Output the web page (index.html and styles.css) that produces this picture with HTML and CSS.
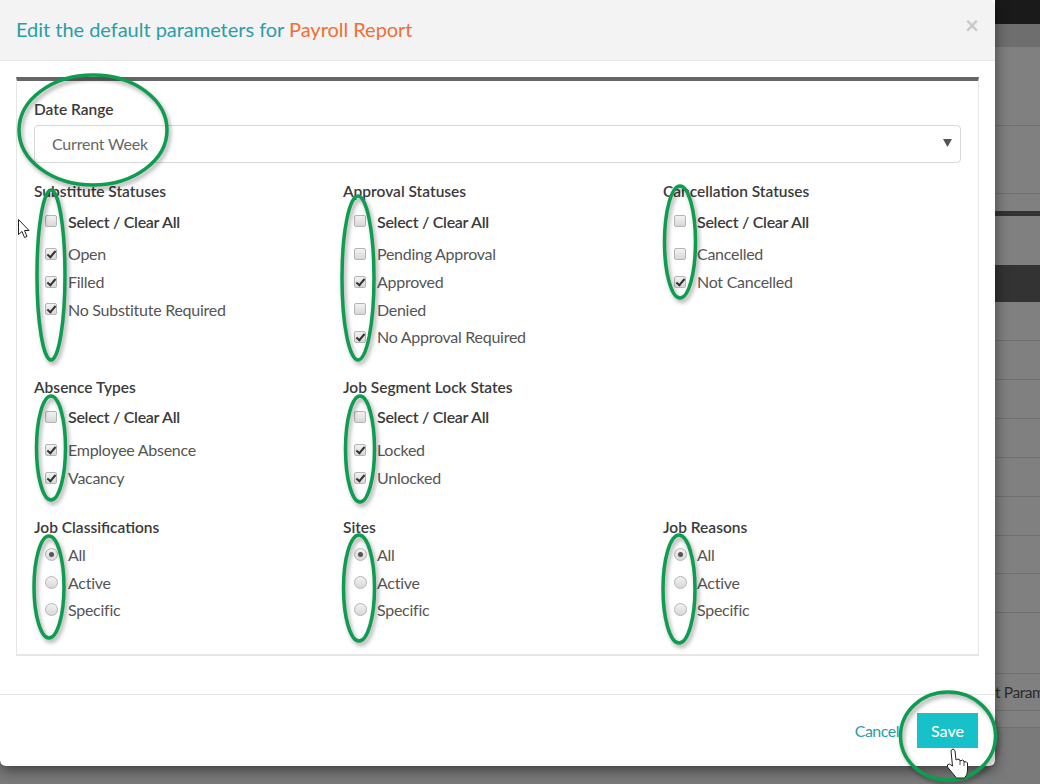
FILE: index.html
```html
<!DOCTYPE html>
<html lang="en">
<head>
  <meta charset="UTF-8" />
  <title>Edit the default parameters</title>
  <link rel="stylesheet" href="styles.css">
</head>
<body>
  <div class="page">
    <div class="topbar"></div>
    <div class="subbar"></div>
    <div class="row row-79"></div>
    <div class="row row-68"></div>
    <div class="row-17"></div>
    <div class="rule"></div>
    <div class="row-49"></div>
    <div class="table-head"></div>
    <div class="row row-39"></div>
    <div class="row row-39"></div>
    <div class="row row-39"></div>
    <div class="row row-39"></div>
    <div class="row row-39"></div>
    <div class="row row-39"></div>
    <div class="row row-38"></div>
    <div class="row row-39"></div>
    <div class="row row-61"></div>
    <div class="row row-37 row-link">t Param</div>
    <div class="row row-17"></div>
  </div>

  <div class="modal">
    <div class="modal-header">
      <h4 class="modal-title">Edit the default parameters for <span class="report-name">Payroll Report</span></h4>
      <span class="close">×</span>
    </div>

    <div class="modal-body">
      <div class="panel">
        <label class="field-label">Date Range</label>
        <div class="select-box">
          <span>Current Week</span>
          <svg class="caret" width="9" height="8" viewBox="0 0 9 8"><path d="M0 0h9L4.500 8z" fill="#555"/></svg>
        </div>

        <div class="param-grid">
          <div class="group group-status">
            <div class="group-title">Substitute Statuses</div>
            <label class="option select-all"><input type="checkbox">Select / Clear All</label>
            <label class="option"><input type="checkbox" checked>Open</label>
            <label class="option"><input type="checkbox" checked>Filled</label>
            <label class="option"><input type="checkbox" checked>No Substitute Required</label>
          </div>
          <div class="group group-status">
            <div class="group-title">Approval Statuses</div>
            <label class="option select-all"><input type="checkbox">Select / Clear All</label>
            <label class="option"><input type="checkbox">Pending Approval</label>
            <label class="option"><input type="checkbox" checked>Approved</label>
            <label class="option"><input type="checkbox">Denied</label>
            <label class="option"><input type="checkbox" checked>No Approval Required</label>
          </div>
          <div class="group group-status">
            <div class="group-title">Cancellation Statuses</div>
            <label class="option select-all"><input type="checkbox">Select / Clear All</label>
            <label class="option"><input type="checkbox">Cancelled</label>
            <label class="option"><input type="checkbox" checked>Not Cancelled</label>
          </div>

          <div class="group group-types">
            <div class="group-title">Absence Types</div>
            <label class="option select-all"><input type="checkbox">Select / Clear All</label>
            <label class="option"><input type="checkbox" checked>Employee Absence</label>
            <label class="option"><input type="checkbox" checked>Vacancy</label>
          </div>
          <div class="group group-types">
            <div class="group-title">Job Segment Lock States</div>
            <label class="option select-all"><input type="checkbox">Select / Clear All</label>
            <label class="option"><input type="checkbox" checked>Locked</label>
            <label class="option"><input type="checkbox" checked>Unlocked</label>
          </div>
          <div class="group group-types"></div>

          <div class="group group-radio">
            <div class="group-title">Job Classifications</div>
            <label class="option"><input type="radio" name="jobclass" checked>All</label>
            <label class="option"><input type="radio" name="jobclass">Active</label>
            <label class="option"><input type="radio" name="jobclass">Specific</label>
          </div>
          <div class="group group-radio">
            <div class="group-title">Sites</div>
            <label class="option"><input type="radio" name="sites" checked>All</label>
            <label class="option"><input type="radio" name="sites">Active</label>
            <label class="option"><input type="radio" name="sites">Specific</label>
          </div>
          <div class="group group-radio">
            <div class="group-title">Job Reasons</div>
            <label class="option"><input type="radio" name="reasons" checked>All</label>
            <label class="option"><input type="radio" name="reasons">Active</label>
            <label class="option"><input type="radio" name="reasons">Specific</label>
          </div>
        </div>
      </div>
    </div>

    <div class="modal-footer">
      <a class="cancel">Cancel</a>
      <button class="save">Save</button>
    </div>
  </div>

  <!-- green circles somebody drew over the screenshot, plus the two mouse pointers -->
  <svg class="marks" width="1040" height="784" viewBox="0 0 1040 784">
    <g class="ring">
      <ellipse cx="93" cy="130" rx="74" ry="55"/>
      <ellipse cx="51" cy="275" rx="14" ry="85"/>
      <ellipse cx="358" cy="278" rx="16" ry="82"/>
      <ellipse cx="680" cy="242" rx="15.500" ry="56"/>
      <ellipse cx="51" cy="448" rx="14.500" ry="52"/>
      <ellipse cx="360" cy="449" rx="14.500" ry="53"/>
      <ellipse cx="49" cy="587" rx="15" ry="51"/>
      <ellipse cx="359" cy="588" rx="15.500" ry="53"/>
      <ellipse cx="679" cy="589" rx="16" ry="54"/>
      <ellipse cx="948" cy="736" rx="47.500" ry="44"/>
    </g>
    <path class="pointer" d="M18.500 219.500v15l3.500-3 2.500 6 2.500-1-2.500-6h4.500z"/>
    <path class="pointer" d="M951 751q2-4 4 0l1 9q2-2 4 0l.5 1q2-2 3.500 0l.5 1q2-1 3 1v8q0 4-3 7h-8l-9-11q-1-3 2-3l3 2z"/>
    <path class="grip" d="M960 760v5M964 761v5"/>
  </svg>
</body>
</html>
```

FILE: styles.css
```css
html, body {
  margin: 0;
  height: 100%;
  overflow: hidden;
}
body {
  background: #7a7a7a;
  font-family: 'Lato', 'Liberation Sans', sans-serif;
  font-size: 16px;
  color: #555;
}

/* page behind the dialog */
.page {
  display: flex;
  flex-direction: column;
}
.topbar {
  height: 24px;
  background: #1a1a1a;
}
.subbar {
  height: 23px;
  background: #6e6e6e;
}
.row {
  box-sizing: border-box;
  background: #808080;
  border-bottom: 1px solid #707070;
}
.row-79 { height: 79px; }
.row-68 { height: 68px; }
.row-17 { height: 17px; background: #808080; }
.row-49 { height: 49px; background: #808080; }
.row-39 { height: 39px; }
.row-38 { height: 38px; }
.row-61 { height: 61px; }
.row-37 { height: 37px; }
.rule {
  height: 5px;
  background: #333;
}
.table-head {
  height: 37px;
  background: #333;
}
.row-link {
  padding-left: 995px;
  line-height: 36px;
  font-size: 15.500px;
  letter-spacing: -0.4px;
  color: #2c2c2c;
  white-space: nowrap;
}

/* dialog */
.modal {
  position: absolute;
  top: 0;
  left: 0;
  width: 995px;
  background: #fff;
  border-radius: 0 0 6px 6px;
  box-shadow: 0 4px 14px rgba(0, 0, 0, 0.5);
}
.modal-header {
  display: flex;
  align-items: center;
  justify-content: space-between;
  box-sizing: border-box;
  height: 61px;
  padding: 0 17px 2px 16px;
  background: #f3f3f3;
  border-bottom: 1px solid #e8e8e8;
  border-top-right-radius: 6px;
}
.modal-title {
  margin: 0;
  font-size: 20px;
  font-weight: 400;
  letter-spacing: -0.03px;
  color: #2a9ea6;
}
.report-name {
  color: #ee6f37;
}
.close {
  font-size: 24px;
  font-weight: 700;
  line-height: 1;
  color: #c9c9c9;
  margin-right: -1px;
  margin-top: -8px;
}
.modal-body {
  padding: 16px;
}
.panel {
  box-sizing: border-box;
  height: 579px;
  padding: 19px 17px 0 17px;
  border: 1px solid #e6e6e6;
  border-top: 4px solid #666;
  border-bottom-width: 2px;
}
.field-label {
  display: block;
  font-size: 15.500px;
  font-weight: 600;
  line-height: 18px;
  color: #3a3a3a;
  margin-bottom: 7px;
}
.select-box {
  display: flex;
  align-items: center;
  justify-content: space-between;
  box-sizing: border-box;
  height: 38px;
  padding: 0 8px 2px 17px;
  border: 1px solid #d8d8d8;
  border-radius: 4px;
  font-size: 16px;
  letter-spacing: -0.2px;
  color: #666;
}
.param-grid {
  display: grid;
  grid-template-columns: 309px 320px 1fr;
  margin-top: 17px;
}
.group-status { height: 196px; }
.group-types { height: 140px; }
.group-title {
  font-size: 15.500px;
  font-weight: 600;
  line-height: 22px;
  color: #3a3a3a;
}
.group-radio .group-title {
  margin-bottom: 2.500px;
}
.option {
  display: flex;
  align-items: center;
  height: 27.700px;
  padding-left: 11px;
  font-size: 16px;
  letter-spacing: -0.27px;
  color: #555;
  white-space: nowrap;
}
.select-all {
  height: 38px;
  font-weight: 600;
  letter-spacing: -0.3px;
  color: #3a3a3a;
}
.group-types .select-all {
  box-sizing: border-box;
  padding-bottom: 1px;
}

/* old chrome look for the inputs */
.option input {
  appearance: none;
  flex: none;
  position: relative;
  box-sizing: border-box;
  width: 12px;
  height: 12px;
  margin: 0 11px 0 0;
  border: 1px solid #b5b5b5;
  background: linear-gradient(#f2f2f2, #d8d8d8);
}
.option input[type="checkbox"] {
  border-radius: 2px;
}
.option input[type="radio"] {
  width: 13px;
  height: 13px;
  margin-right: 10px;
  border-radius: 50%;
}
.option input[type="checkbox"]:checked::after {
  content: "";
  position: absolute;
  left: 3px;
  top: 0;
  width: 3px;
  height: 7px;
  border: solid #333;
  border-width: 0 2px 2px 0;
  transform: rotate(40deg);
}
.option input[type="radio"]:checked::after {
  content: "";
  position: absolute;
  left: 3px;
  top: 3px;
  width: 5px;
  height: 5px;
  border-radius: 50%;
  background: #555;
}

.modal-footer {
  display: flex;
  align-items: center;
  justify-content: flex-end;
  gap: 18px;
  box-sizing: border-box;
  height: 72px;
  padding: 0 17px 0 0;
  margin-top: 22px;
  border-top: 1px solid #e6e6e6;
}
.cancel {
  font-size: 16px;
  letter-spacing: -0.5px;
  color: #2a9ea6;
}
.save {
  width: 61px;
  height: 35px;
  border: none;
  background: #17c1c9;
  color: #fff;
  font-family: inherit;
  font-size: 16px;
  font-weight: 500;
}

.marks {
  position: absolute;
  top: 0;
  left: 0;
  pointer-events: none;
}
.ring {
  fill: none;
  stroke: #0e9c50;
  stroke-width: 3.500;
  filter: drop-shadow(2px 3px 2px rgba(0, 0, 0, 0.35));
}
.pointer {
  fill: #fff;
  stroke: #222;
  stroke-width: 1;
}
.grip {
  fill: none;
  stroke: #222;
  stroke-width: 0.800;
}
```
